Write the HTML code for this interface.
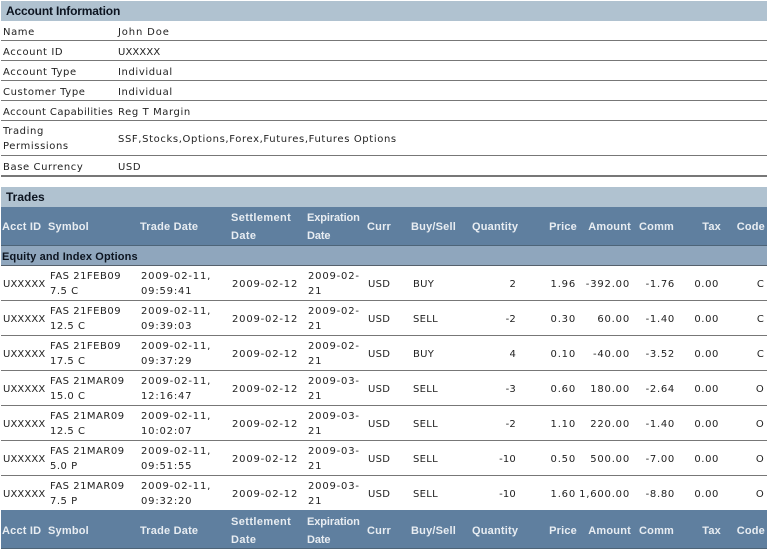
<!DOCTYPE html>
<html>
<head>
<meta charset="utf-8">
<style>
html,body{margin:0;padding:0;background:#fff;width:770px;height:551px;overflow:hidden}
#p{position:relative;width:770px;height:551px;overflow:hidden;font:10px/14px "DejaVu Sans",sans-serif;color:#222;letter-spacing:.6px}
.b{position:absolute;left:1px;width:766px}
.t{position:absolute;white-space:nowrap}
.bar{background:#b0c2d0;height:20px}
.hd{background:#5f7f9f;height:38px;border-bottom:1px solid #4d6478}
.sec{background:#8fa6bd;height:19px;border-bottom:1px solid #55606c}
.l{height:1px;background:#777}
.h1{font:bold 12px/14px "Liberation Sans",sans-serif;color:#0c1420;letter-spacing:0}
.k{font:bold 11px/14px "Liberation Sans",sans-serif;color:#0c1420;letter-spacing:.13px}
.r{position:absolute;left:0;width:770px;height:35px;letter-spacing:.8px}
.r .t{line-height:15px}
.u{letter-spacing:.12px}
.v{letter-spacing:.3px}
.s1{top:12px}
.s2{top:4px;white-space:pre-line;line-height:15px}
.f{letter-spacing:.5px}
.q{right:254px;top:12px;letter-spacing:.2px}.pr{right:194px;top:12px}.a{right:140px;top:12px}.c{right:95px;top:12px;letter-spacing:.7px}.x{right:51px;top:12px;letter-spacing:.6px}.o{right:6px;top:12px;letter-spacing:.2px}
.hh{position:absolute;left:0;width:770px;height:38px}
.hh .t{font:bold 11px/18px "Liberation Sans",sans-serif;color:#e8edf2;letter-spacing:.2px;top:11px}
.hh .w{top:2px;white-space:pre-line}
.hh .e{letter-spacing:-.1px}
.hh .st{letter-spacing:.4px}
</style>
</head>
<body>
<div id="p">
<div class="b bar" style="top:1px"></div>
<div class="t h1" style="left:6px;top:4px;letter-spacing:-.17px">Account Information</div>
<div class="t" style="left:3px;top:26px">Name</div><div class="t" style="left:118px;top:26px;letter-spacing:.85px">John Doe</div>
<div class="b l" style="top:40px"></div>
<div class="t" style="left:3px;top:46px">Account ID</div><div class="t u" style="left:118px;top:46px">UXXXXX</div>
<div class="b l" style="top:60px"></div>
<div class="t" style="left:3px;top:66px">Account Type</div><div class="t" style="left:118px;top:66px">Individual</div>
<div class="b l" style="top:80px"></div>
<div class="t" style="left:3px;top:86px">Customer Type</div><div class="t" style="left:118px;top:86px">Individual</div>
<div class="b l" style="top:100px"></div>
<div class="t" style="left:3px;top:106px;letter-spacing:.42px">Account Capabilities</div><div class="t" style="left:118px;top:106px">Reg T Margin</div>
<div class="b l" style="top:120px"></div>
<div class="t" style="left:3px;top:125px">Trading</div><div class="t" style="left:3px;top:140px">Permissions</div><div class="t" style="left:118px;top:133px;letter-spacing:.62px">SSF,Stocks,Options,Forex,Futures,Futures Options</div>
<div class="b l" style="top:155px"></div>
<div class="t" style="left:3px;top:161px">Base Currency</div><div class="t" style="left:118px;top:161px">USD</div>
<div class="b l" style="top:175px;height:2px"></div>

<div class="b bar" style="top:187px"></div>
<div class="t h1" style="left:6px;top:190px">Trades</div>

<div class="b hd" style="top:207px"></div>
<div class="hh" style="top:207px">
<div class="t" style="left:2px">Acct ID</div><div class="t" style="left:48px">Symbol</div><div class="t" style="left:140px">Trade Date</div>
<div class="t w st" style="left:231px">Settlement
Date</div><div class="t w e" style="left:307px">Expiration
Date</div><div class="t" style="left:367px">Curr</div><div class="t" style="left:411px">Buy/Sell</div><div class="t" style="left:472px">Quantity</div>
<div class="t" style="right:193px">Price</div><div class="t" style="right:139px">Amount</div><div class="t" style="left:639px">Comm</div><div class="t" style="right:49px">Tax</div><div class="t" style="right:5px">Code</div>
</div>

<div class="b sec" style="top:246px"></div>
<div class="t k" style="left:2px;top:250px">Equity and Index Options</div>

<div class="r" style="top:265px"><div class="t s1 u" style="left:3px">UXXXXX</div><div class="t s2 f" style="left:50px">FAS 21FEB09
7.5 C</div><div class="t s2" style="left:141px">2009-02-11,
09:59:41</div><div class="t s1" style="left:232px">2009-02-12</div><div class="t s2" style="left:308px">2009-02-
21</div><div class="t s1 v" style="left:368px">USD</div><div class="t s1 v" style="left:413px">BUY</div><div class="t q">2</div><div class="t pr">1.96</div><div class="t a">-392.00</div><div class="t c">-1.76</div><div class="t x">0.00</div><div class="t o">C</div></div>
<div class="b l" style="top:300px"></div>

<div class="r" style="top:300px"><div class="t s1 u" style="left:3px">UXXXXX</div><div class="t s2 f" style="left:50px">FAS 21FEB09
12.5 C</div><div class="t s2" style="left:141px">2009-02-11,
09:39:03</div><div class="t s1" style="left:232px">2009-02-12</div><div class="t s2" style="left:308px">2009-02-
21</div><div class="t s1 v" style="left:368px">USD</div><div class="t s1 v" style="left:413px">SELL</div><div class="t q">-2</div><div class="t pr">0.30</div><div class="t a">60.00</div><div class="t c">-1.40</div><div class="t x">0.00</div><div class="t o">C</div></div>
<div class="b l" style="top:335px"></div>

<div class="r" style="top:335px"><div class="t s1 u" style="left:3px">UXXXXX</div><div class="t s2 f" style="left:50px">FAS 21FEB09
17.5 C</div><div class="t s2" style="left:141px">2009-02-11,
09:37:29</div><div class="t s1" style="left:232px">2009-02-12</div><div class="t s2" style="left:308px">2009-02-
21</div><div class="t s1 v" style="left:368px">USD</div><div class="t s1 v" style="left:413px">BUY</div><div class="t q">4</div><div class="t pr">0.10</div><div class="t a">-40.00</div><div class="t c">-3.52</div><div class="t x">0.00</div><div class="t o">C</div></div>
<div class="b l" style="top:370px"></div>

<div class="r" style="top:370px"><div class="t s1 u" style="left:3px">UXXXXX</div><div class="t s2 f" style="left:50px">FAS 21MAR09
15.0 C</div><div class="t s2" style="left:141px">2009-02-11,
12:16:47</div><div class="t s1" style="left:232px">2009-02-12</div><div class="t s2" style="left:308px">2009-03-
21</div><div class="t s1 v" style="left:368px">USD</div><div class="t s1 v" style="left:413px">SELL</div><div class="t q">-3</div><div class="t pr">0.60</div><div class="t a">180.00</div><div class="t c">-2.64</div><div class="t x">0.00</div><div class="t o">O</div></div>
<div class="b l" style="top:405px"></div>

<div class="r" style="top:405px"><div class="t s1 u" style="left:3px">UXXXXX</div><div class="t s2 f" style="left:50px">FAS 21MAR09
12.5 C</div><div class="t s2" style="left:141px">2009-02-11,
10:02:07</div><div class="t s1" style="left:232px">2009-02-12</div><div class="t s2" style="left:308px">2009-03-
21</div><div class="t s1 v" style="left:368px">USD</div><div class="t s1 v" style="left:413px">SELL</div><div class="t q">-2</div><div class="t pr">1.10</div><div class="t a">220.00</div><div class="t c">-1.40</div><div class="t x">0.00</div><div class="t o">O</div></div>
<div class="b l" style="top:440px"></div>

<div class="r" style="top:440px"><div class="t s1 u" style="left:3px">UXXXXX</div><div class="t s2 f" style="left:50px">FAS 21MAR09
5.0 P</div><div class="t s2" style="left:141px">2009-02-11,
09:51:55</div><div class="t s1" style="left:232px">2009-02-12</div><div class="t s2" style="left:308px">2009-03-
21</div><div class="t s1 v" style="left:368px">USD</div><div class="t s1 v" style="left:413px">SELL</div><div class="t q">-10</div><div class="t pr">0.50</div><div class="t a">500.00</div><div class="t c">-7.00</div><div class="t x">0.00</div><div class="t o">O</div></div>
<div class="b l" style="top:475px"></div>

<div class="r" style="top:475px"><div class="t s1 u" style="left:3px">UXXXXX</div><div class="t s2 f" style="left:50px">FAS 21MAR09
7.5 P</div><div class="t s2" style="left:141px">2009-02-11,
09:32:20</div><div class="t s1" style="left:232px">2009-02-12</div><div class="t s2" style="left:308px">2009-03-
21</div><div class="t s1 v" style="left:368px">USD</div><div class="t s1 v" style="left:413px">SELL</div><div class="t q">-10</div><div class="t pr">1.60</div><div class="t a">1,600.00</div><div class="t c">-8.80</div><div class="t x">0.00</div><div class="t o">O</div></div>

<div class="b hd" style="top:510px"></div>
<div class="hh" style="top:511px">
<div class="t" style="left:2px">Acct ID</div><div class="t" style="left:48px">Symbol</div><div class="t" style="left:140px">Trade Date</div>
<div class="t w st" style="left:231px">Settlement
Date</div><div class="t w e" style="left:307px">Expiration
Date</div><div class="t" style="left:367px">Curr</div><div class="t" style="left:411px">Buy/Sell</div><div class="t" style="left:472px">Quantity</div>
<div class="t" style="right:193px">Price</div><div class="t" style="right:139px">Amount</div><div class="t" style="left:639px">Comm</div><div class="t" style="right:49px">Tax</div><div class="t" style="right:5px">Code</div>
</div>
</div>
</body>
</html>
